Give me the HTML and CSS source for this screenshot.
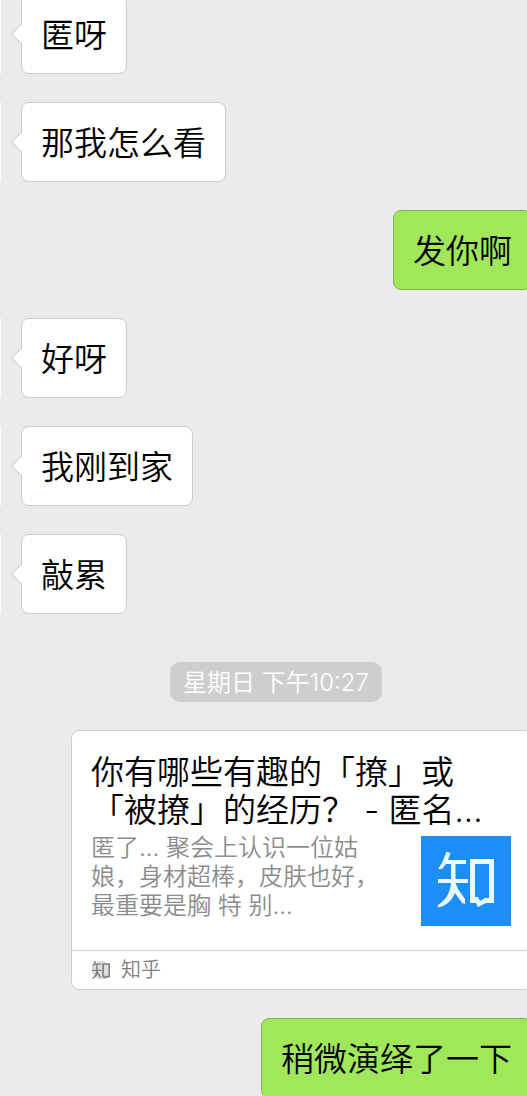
FILE: index.html
```html
<!DOCTYPE html>
<html lang="zh-CN">
<head>
<meta charset="utf-8">
<meta name="viewport" content="width=device-width, initial-scale=1">
<title>聊天</title>
<link rel="stylesheet" href="styles.css">
</head>
<body>
<svg class="defs" aria-hidden="true">
  <symbol id="zhihu" viewBox="0 0 90 90">
    <path d="M25.500 15.500L29.500 17L27 24H45V28H34.500V43H47V47H34.500L37 53L44 63V68L41 67L34 57C31 64 26 70 17 71.500V69C25 64 29 57 30 47H17V43L30 43V28H25L21 33H17L21 27Z" fill="currentColor"/>
    <path fill="currentColor" fill-rule="evenodd" d="M49 23H73V67H65L57 71L55 67H49ZM54 28V61H57L59 65L64 62H68V28Z"/>
  </symbol>
</svg>
<main class="chat">
  <ol class="messages">
    <li class="row received"><span class="avatar"></span><p class="bubble">匿呀</p></li>
    <li class="row received"><span class="avatar"></span><p class="bubble">那我怎么看</p></li>
    <li class="row sent"><p class="bubble">发你啊</p></li>
    <li class="row received"><span class="avatar"></span><p class="bubble">好呀</p></li>
    <li class="row received"><span class="avatar"></span><p class="bubble">我刚到家</p></li>
    <li class="row received"><span class="avatar"></span><p class="bubble">敲累</p></li>
    <li class="row stamp"><time class="time">星期日 下午10:27</time></li>
    <li class="row shared">
      <a class="card" href="#">
        <span class="card-main">
          <span class="card-title">你有哪些有趣的「撩」或<br>「被撩」的经历？ - 匿名...</span>
          <span class="card-body">
            <span class="card-text">匿了... 聚会上认识一位姑<br>娘，身材超棒，皮肤也好，<br>最重要是胸 特 别...</span>
            <svg class="thumb" role="img" aria-label="知乎"><use href="#zhihu"/></svg>
          </span>
        </span>
        <span class="card-source">
          <svg class="source-icon" viewBox="14 13 62 62" aria-hidden="true"><circle cx="45" cy="44" r="29" fill="#dedede"/><use href="#zhihu" width="90" height="90"/></svg>
          <span>知乎</span>
        </span>
      </a>
    </li>
    <li class="row sent"><p class="bubble">稍微演绎了一下</p></li>
  </ol>
</main>
</body>
</html>
```
FILE: styles.css
```css
* {
  box-sizing: border-box;
}

body {
  margin: 0;
  background: #ebebeb;
  color: #000;
  font-family: Inter, "Noto Sans CJK SC", sans-serif;
  font-weight: 350;
}

.defs {
  position: absolute;
  width: 0;
  height: 0;
}

.chat {
  height: 100vh;
  overflow: hidden;
}

.messages {
  display: flex;
  flex-direction: column;
  gap: 28px;
  margin: -6px -5px 0 0;
  padding: 0;
  list-style: none;
}

.row {
  display: flex;
}

.received {
  gap: 20px;
}

.sent {
  justify-content: flex-end;
}

.avatar {
  width: 1px;
  background: #fafffd;
}

.bubble {
  position: relative;
  margin: 0;
  padding: 16px 19px 14px;
  border: 1px solid #cbcbcb;
  border-radius: 8px;
  background: #fff;
  font-size: 33px;
  line-height: 48px;
}

.received .bubble::before {
  content: "";
  position: absolute;
  top: 50%;
  left: -8px;
  width: 14px;
  height: 14px;
  border: 1px solid #cbcbcb;
  border-width: 0 0 1px 1px;
  background: #fff;
  transform: translateY(-50%) rotate(45deg);
}

.sent .bubble {
  border-color: #7fb454;
  background: #a0e75a;
}

.stamp {
  justify-content: center;
  margin: 20px 0 0 20px;
}

.time {
  padding: 1px 13px 0;
  border-radius: 10px;
  background: #cecece;
  color: #fff;
  font-size: 24px;
  line-height: 39px;
}

.card {
  flex: 1;
  margin-left: 71px;
  border: 1px solid #cbcbcb;
  border-radius: 8px;
  background: #fff;
  color: inherit;
  text-decoration: none;
}

.card-main {
  display: block;
  padding: 22px 20px 24px 19px;
}

.card-title {
  display: block;
  font-size: 33px;
  line-height: 38px;
}

.card-body {
  display: flex;
  justify-content: space-between;
  align-items: flex-end;
  padding-top: 4px;
}

.card-text {
  align-self: flex-start;
  color: #8c8c8c;
  font-size: 24px;
  line-height: 29px;
  white-space: nowrap;
}

.thumb {
  flex: none;
  width: 90px;
  height: 90px;
  margin-top: 3px;
  background: #1b8ff7;
  color: #e9fbff;
}

.card-source {
  display: flex;
  align-items: center;
  gap: 10px;
  padding: 0 19px;
  border-top: 1px solid #cbcbcb;
  color: #808080;
  font-size: 20px;
  line-height: 38px;
}

.source-icon {
  width: 20px;
  height: 20px;
}
```
